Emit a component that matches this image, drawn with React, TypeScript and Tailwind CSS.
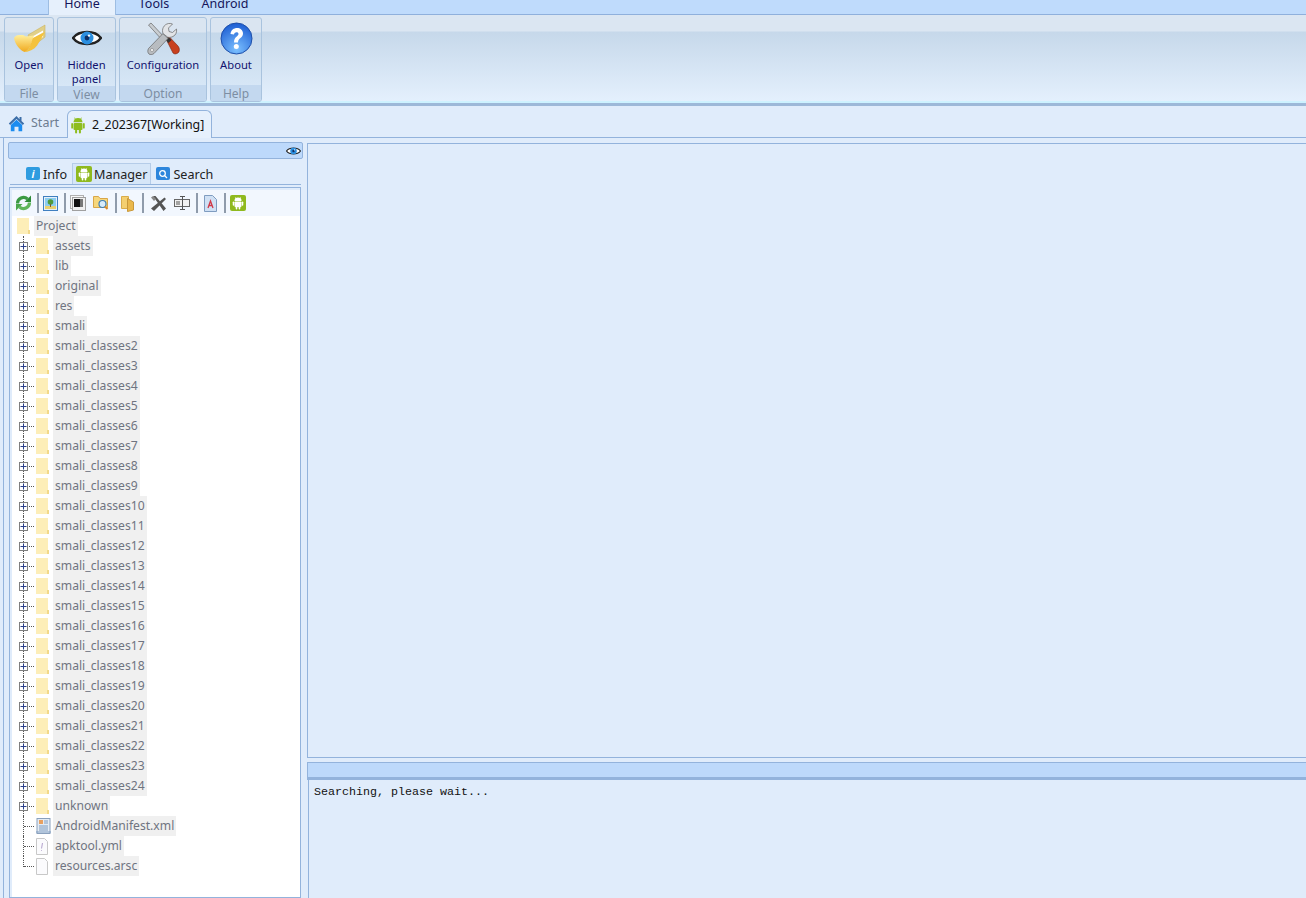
const font = "font-['Noto_Sans','Liberation_Sans',sans-serif]";

const folders = [
  'assets', 'lib', 'original', 'res', 'smali',
  'smali_classes2', 'smali_classes3', 'smali_classes4', 'smali_classes5', 'smali_classes6',
  'smali_classes7', 'smali_classes8', 'smali_classes9', 'smali_classes10', 'smali_classes11',
  'smali_classes12', 'smali_classes13', 'smali_classes14', 'smali_classes15', 'smali_classes16',
  'smali_classes17', 'smali_classes18', 'smali_classes19', 'smali_classes20', 'smali_classes21',
  'smali_classes22', 'smali_classes23', 'smali_classes24', 'unknown',
];

function AndroidIcon({ color = '#8ebd1e', size = 16 }: { color?: string; size?: number }) {
  return (
    <svg width={size} height={size} viewBox="0 0 16 16" className="shrink-0">
      <path d="M4 5.600a4 3.800 0 0 1 8 0z" fill={color} />
      <path d="M5 1.500 6 3.500M11 1.500 10 3.500" stroke={color} strokeWidth="0.8" />
      <rect x="4" y="6.200" width="8" height="6.300" rx="1" fill={color} />
      <rect x="2" y="6.200" width="1.600" height="5" rx="0.8" fill={color} />
      <rect x="12.400" y="6.200" width="1.600" height="5" rx="0.8" fill={color} />
      <rect x="5.400" y="12" width="1.800" height="3.500" rx="0.9" fill={color} />
      <rect x="8.800" y="12" width="1.800" height="3.500" rx="0.9" fill={color} />
    </svg>
  );
}

function BoxedAndroid() {
  return (
    <span className="flex h-4 w-4 shrink-0 items-center justify-center rounded-[2px] bg-[#8fb91e]">
      <AndroidIcon color="#ffffff" size={14} />
    </span>
  );
}

function EyeIcon({ w = 30, h = 20 }: { w?: number; h?: number }) {
  return (
    <svg width={w} height={h} viewBox="0 0 30 20">
      <path d="M1 10C7 2 23 2 29 10C23 18 7 18 1 10Z" fill="#fff" stroke="#222" strokeWidth="2.400" />
      <circle cx="15" cy="10" r="6.500" fill="#2b8fe0" />
      <circle cx="15" cy="10" r="2.400" fill="#0d2f66" />
      <circle cx="17" cy="7.600" r="1.200" fill="#fff" />
    </svg>
  );
}

function HomeIcon() {
  return (
    <svg width="17" height="17" viewBox="0 0 17 17" className="shrink-0">
      <path d="M8.500 1 .800 8.600l1.400 1.300L8.500 4l6.300 5.900 1.400-1.300L13.500 6V2h-2v2.200z" fill="#3c6ea8" />
      <path d="M2.800 10 8.500 4.800l5.700 5.200v6.300h-3.700v-4.500h-4v4.500H2.800z" fill="#1b8cf0" />
    </svg>
  );
}

function OpenIcon() {
  return (
    <svg width="33" height="29" viewBox="0 0 33 29">
      <defs>
        <linearGradient id="openFolder" x1="0" y1="0" x2="0" y2="1">
          <stop offset="0" stopColor="#ffef9c" />
          <stop offset="1" stopColor="#f0a91e" />
        </linearGradient>
      </defs>
      <path d="M15 11 32 1v12L19 23z" fill="#e0cf88" stroke="#cdb35c" strokeWidth="0.6" />
      <path d="M17 14 30 6.500v2L17 16zM17 18.500 30 11v2l-13 7.500z" fill="#fff" />
      <path d="M1 14c1-2 3-3 5-3h4l3 1.500 8-1-3 9c-1 3-3 6-6 7.500C8 27 2 21 1 14z" fill="url(#openFolder)" />
      <path d="M32 8 20 14l-3 8c-1 3-2.500 4.500-5 6 6-.5 11-4 13-8z" fill="#f4c23c" />
    </svg>
  );
}

function ToolsIcon() {
  return (
    <svg width="33" height="33" viewBox="0 0 33 33">
      <path d="M1.500 3 4 1l15 16-2.500 2.500z" fill="#c9cdd1" stroke="#666" strokeWidth="0.7" />
      <path d="M19 17 22 14.500 31 24c2 2.500 1.500 5 .5 6.500-1.500 1.500-4 2-5.500.5z" fill="#c8401e" stroke="#7c2410" strokeWidth="0.6" />
      <path d="M18.500 17.500 21.500 15 24.500 18 21.500 21z" fill="#333" />
      <path d="M1.500 26.500 16 11.500 21 16.500 7 31.500c-2 1.500-4 1.500-5 .5-1.500-1.500-1.500-3.500-.5-5.500z" fill="#b8bcc0" stroke="#666" strokeWidth="0.7" />
      <path d="M16 11.500c-1.500-4 .5-9 5.500-10 1.500-.2 3 0 4 .5L21.500 6l.5 3.500 3.500 1 4-3.500c.5 3-.5 6-3.500 7.500-2.500 1.200-4.500 1-5.500.5z" fill="#e2e4e7" stroke="#666" strokeWidth="0.7" />
      <circle cx="5" cy="28" r="1.500" fill="#fff" stroke="#666" strokeWidth="0.5" />
    </svg>
  );
}

function HelpIcon() {
  return (
    <svg width="33" height="33" viewBox="0 0 33 33">
      <defs>
        <radialGradient id="helpBall" cx="0.5" cy="0.85" r="0.9">
          <stop offset="0" stopColor="#7bc0ff" />
          <stop offset="1" stopColor="#1657d0" />
        </radialGradient>
      </defs>
      <circle cx="16.500" cy="16.500" r="15.500" fill="url(#helpBall)" stroke="#1f4fa8" strokeWidth="1" />
      <path d="M10.500 12c.5-8 12.500-8 12.500-.5 0 4.500-5 4.500-5 9h-4c0-6 4.500-6 4.500-8.500 0-2.500-4-2.500-4.500.5z" fill="#fff" />
      <circle cx="16.300" cy="24.500" r="2.500" fill="#fff" />
    </svg>
  );
}

function RibbonGroup({ width, label, title, icon }: { width: string; label: string; title: React.ReactNode; icon: React.ReactNode }) {
  return (
    <div className={`${width} flex h-[85px] flex-col overflow-hidden rounded-[3px] border border-[#a9c3de] bg-[linear-gradient(#dae5f1_0,#dae5f1_14px,#c5d8ea_15px,#dcebfa_100%)]`}>
      <div className="flex flex-1 flex-col items-center">
        <div className="flex h-[40px] w-full shrink-0 items-center justify-center">{icon}</div>
        <div className="text-center text-[11.2px] leading-[14px] text-[#12126e]">{title}</div>
      </div>
      <div className="h-[16px] bg-[#c3d8ef] text-center text-[12px] leading-[17px] text-[#7d8ea3]">{label}</div>
    </div>
  );
}

function PlusBox() {
  return (
    <span className="flex h-[9px] w-[9px] shrink-0 items-center justify-center border border-[#7f7f7f] bg-white">
      <svg width="7" height="7" viewBox="0 0 7 7">
        <path d="M0.500 3.500h6M3.500 0.500v6" stroke="#2a3f8a" strokeWidth="1" />
      </svg>
    </span>
  );
}

function FolderGlyph() {
  return (
    <svg width="13" height="17" viewBox="0 0 13 17" className="shrink-0">
      <path d="M0 0h12v14l-1 0v2H0z" fill="#fdeeb8" />
      <path d="M11 12h2v4h-2z" fill="#f2d98a" />
    </svg>
  );
}

function ManifestGlyph() {
  return (
    <svg width="15" height="17" viewBox="0 0 15 17" className="shrink-0">
      <rect x="1" y="0.500" width="13" height="15" fill="#e4ecf5" stroke="#8aa0bc" />
      <rect x="3" y="2" width="4" height="4" fill="#e8a060" />
      <path d="M8 3h4M8 5h4M3 8h9M3 10h9M3 12h9M0 14h15" stroke="#7f9cc0" strokeWidth="1" />
    </svg>
  );
}

function FileGlyph({ mark }: { mark?: boolean }) {
  return (
    <svg width="12" height="17" viewBox="0 0 12 17" className="shrink-0">
      <path d="M.500.500h8l3 3v13h-11z" fill="#fbfbfd" stroke="#c8c8c8" />
      {mark && <path d="M6.500 5 5.500 10.500M5.200 12.500h.8" stroke="#b8a8d0" strokeWidth="1.100" />}
    </svg>
  );
}

function TreeRow({ label, icon, plus, last }: { label: string; icon: React.ReactNode; plus?: boolean; last?: boolean }) {
  return (
    <div className="flex h-5 items-center">
      <div className="relative flex h-5 w-[24px] shrink-0 items-center">
        <div className={`absolute left-[11px] top-0 border-l border-dotted border-[#555] ${last ? 'h-[11px]' : 'h-5'}`} />
        <div className="absolute left-[12px] top-[10px] w-[10px] border-t border-dotted border-[#555]" />
        {plus && <div className="absolute left-[7px] top-[6px]"><PlusBox /></div>}
      </div>
      <div className="flex w-[17px] shrink-0 justify-start">{icon}</div>
      <span className="flex h-5 items-center bg-[#f0f0f0] px-[2px] text-[12.150px] text-[#6f7480]">{label}</span>
    </div>
  );
}

function Sep({ className }: { className: string }) {
  return <div className={`${className} h-[20px] w-[2px] shrink-0 bg-[#8f9bab]`} />;
}

function Toolbar() {
  return (
    <div className="flex h-[26px] shrink-0 items-center bg-[#f2f7fe] pl-[3px]">
      <svg width="17" height="18" viewBox="0 0 17 18" className="shrink-0">
        <path d="M2.500 9.500a6 6 0 0 1 10-4.500" fill="none" stroke="#3b9a42" strokeWidth="3.200" />
        <path d="M14.500 8.500a6 6 0 0 1-10 4.500" fill="none" stroke="#5fb55a" strokeWidth="3.200" />
        <path d="M16 1.500v6.500h-6.500z" fill="#2d8a36" />
        <path d="M1 16.500V10h6.500z" fill="#4aa64a" />
      </svg>
      <Sep className="ml-[5px]" />
      <svg width="15" height="15" viewBox="0 0 15 15" className="ml-[4px] shrink-0">
        <rect x="0.500" y="0.500" width="14" height="14" fill="#e6f0fa" stroke="#3f7fc0" />
        <rect x="2" y="2" width="11" height="8" fill="#8ccdf0" />
        <path d="M2 10h11v3H2z" fill="#e8d070" />
        <circle cx="7.500" cy="6" r="2.800" fill="#4f9a3a" />
        <path d="M7 8h1v3H7z" fill="#7a5a2a" />
      </svg>
      <Sep className="ml-[6px]" />
      <svg width="16" height="16" viewBox="0 0 16 16" className="ml-[4px] shrink-0">
        <rect x="0.500" y="0.500" width="13" height="13" fill="#f8f8f8" stroke="#b0b0b0" />
        <rect x="2.500" y="2.500" width="13" height="13" fill="#f0f0f0" stroke="#a0a0a0" />
        <rect x="4" y="4" width="9" height="8" fill="#111" />
        <path d="M10 4h3v8h-3z" fill="#777" />
      </svg>
      <svg width="16" height="16" viewBox="0 0 16 16" className="ml-[7px] shrink-0">
        <path d="M.500 1.500h5l1.500 2h7.500v9H.500z" fill="#f6d77c" stroke="#d9a648" />
        <circle cx="9.500" cy="9" r="3.500" fill="#d8ecfa" stroke="#3f7fb5" strokeWidth="1.200" />
        <path d="m12 11.500 2.500 2.500" stroke="#d98a2b" strokeWidth="2" />
      </svg>
      <Sep className="ml-[6px]" />
      <svg width="13" height="17" viewBox="0 0 13 17" className="ml-[4px] shrink-0">
        <path d="M.500 1.500h7v12h-7z" fill="#f4cf70" stroke="#d9ac4b" />
        <path d="M6.500 3.500 12.500 7v8l-6 1.500z" fill="#eab84c" stroke="#c9983a" />
      </svg>
      <Sep className="ml-[8px]" />
      <svg width="15" height="15" viewBox="0 0 15 15" className="ml-[7px] shrink-0">
        <path d="M2 0 4.500 0 15 12.500 12.500 15zM13.500 1.500 15 3 3 15 0 12.500z" fill="#555" />
        <path d="M0 1.500 2 0l3 3-2 2z" fill="#888" />
      </svg>
      <svg width="16" height="14" viewBox="0 0 16 14" className="ml-[8px] shrink-0">
        <rect x="0.500" y="3.500" width="15" height="7" fill="#f2f2f2" stroke="#666" />
        <path d="M8.500 .5v13M6 .5h5M6 13.500h5M2 6h4M2 8h4" stroke="#555" fill="none" />
      </svg>
      <Sep className="ml-[6px]" />
      <svg width="13" height="17" viewBox="0 0 13 17" className="ml-[6px] shrink-0">
        <path d="M.500.500h8l4 4v12H.500z" fill="#cfe0f4" stroke="#7f9cc0" />
        <path d="M4 13 6.500 6 9 13M5 10.500h3" fill="none" stroke="#d03a4a" strokeWidth="1.300" />
      </svg>
      <Sep className="ml-[7px]" />
      <div className="ml-[4px]"><BoxedAndroid /></div>
    </div>
  );
}

export default function App() {
  return (
    <div className={`${font} flex h-[898px] w-[1306px] flex-col overflow-hidden bg-[#e0ecfb]`}>
      {/* ribbon tabs, cut off at the top of the window */}
      <div className="flex h-[15px] shrink-0 border-b border-[#8fb0dc] bg-[#bfdbfc] pl-[48px] text-[12.500px] text-[#15155a]">
        <div className="-mb-px h-[15px] w-[68px] overflow-hidden border-x border-[#9dbde2] bg-[#e6f0fc] text-center">
          <div className="-mt-[5px] leading-[18px]">Home</div>
        </div>
        <div className="h-[14px] w-[76px] overflow-hidden text-center">
          <div className="-mt-[5px] leading-[18px]">Tools</div>
        </div>
        <div className="h-[14px] w-[66px] overflow-hidden text-center">
          <div className="-mt-[5px] leading-[18px]">Android</div>
        </div>
      </div>

      {/* ribbon */}
      <div className="flex h-[91px] shrink-0 gap-[3px] border-b-[3px] border-[#9db8d8] bg-[linear-gradient(#dbe6f2_0,#dbe6f2_16px,#c6d8ea_17px,#e4f0fd_86px,#cdf2ff_86px)] pl-[4px] pt-[2px]">
        <RibbonGroup width="w-[50px]" label="File" title="Open" icon={<OpenIcon />} />
        <RibbonGroup width="w-[59px]" label="View" title={<>Hidden<br />panel</>} icon={<EyeIcon />} />
        <RibbonGroup width="w-[88px]" label="Option" title="Configuration" icon={<ToolsIcon />} />
        <RibbonGroup width="w-[52px]" label="Help" title="About" icon={<HelpIcon />} />
      </div>

      {/* document tabs */}
      <div className="flex h-[32px] shrink-0 items-end border-b border-[#93b3dc] pl-[8px]">
        <div className="flex h-[28px] w-[59px] items-center gap-[6px] pt-[1px] text-[12.500px] text-[#6d7c90]">
          <HomeIcon />
          Start
        </div>
        <div className="-mb-px flex h-[28px] w-[145px] items-center gap-[5px] rounded-t-[6px] border border-b-0 border-[#93b3dc] bg-[#e6f0fc] pl-[1px] pt-[1px] text-[12.400px] text-[#111]">
          <AndroidIcon size={18} />
          2_202367[Working]
        </div>
      </div>

      <div className="flex min-h-0 flex-1">
        {/* left panel */}
        <div className="ml-[3px] flex w-[301px] shrink-0 flex-col border-l border-[#93b3dc] pl-[4px] pr-[1px] pt-[4px]">
          <div className="flex h-[17px] shrink-0 items-center justify-end rounded-[2px] border border-[#93b3dc] bg-[#bdd9fb] pr-[1px]">
            <EyeIcon w={15} h={10} />
          </div>
          <div className="mx-[2px] mt-[3px] flex h-[23px] shrink-0 items-end border-b border-[#93b3dc] pl-[16px] text-[12.600px] text-[#222]">
            <div className="flex h-[20px] items-center gap-[3px] pr-[5px] pt-[2px]">
              <span className="-mt-[3px] flex h-[13px] w-[14px] items-center justify-center rounded-[2px] bg-[#2f9ce0] text-[10px] font-bold italic leading-none text-white">i</span>
              Info
            </div>
            <div className="flex h-[21px] items-center gap-[2px] border border-b-0 border-[#b5cce8] bg-[#d6e6f8] px-[3px] pt-[2px]">
              <div className="-mt-[3px]"><BoxedAndroid /></div>
              Manager
            </div>
            <div className="flex h-[20px] items-center gap-[3px] pl-[5px] pt-[2px]">
              <span className="-mt-[3px] flex h-[13px] w-[14px] items-center justify-center rounded-[2px] bg-[#2d86dc]">
                <svg width="10" height="10" viewBox="0 0 10 10">
                  <circle cx="4.500" cy="4.500" r="2.800" fill="none" stroke="#fff" strokeWidth="1.300" />
                  <path d="m6.500 6.500 2.500 2.500" stroke="#fff" strokeWidth="1.300" />
                </svg>
              </span>
              Search
            </div>
          </div>
          <div className="ml-[1px] mr-[2px] mt-[2px] flex min-h-0 flex-1 flex-col border border-[#93b3dc] pl-[2px] pt-[2px]">
            <Toolbar />
            <div className="flex-1 bg-white">
              <div className="flex h-5 items-center pl-[5px]">
                <div className="w-[17px] shrink-0"><FolderGlyph /></div>
                <span className="flex h-5 items-center bg-[#f0f0f0] px-[2px] text-[12.150px] text-[#6f7480]">Project</span>
              </div>
              {folders.map(name => (
                <TreeRow key={name} label={name} icon={<FolderGlyph />} plus />
              ))}
              <TreeRow label="AndroidManifest.xml" icon={<ManifestGlyph />} />
              <TreeRow label="apktool.yml" icon={<FileGlyph mark />} />
              <TreeRow label="resources.arsc" icon={<FileGlyph />} last />
            </div>
          </div>
        </div>

        {/* right side */}
        <div className="flex min-w-0 flex-1 flex-col pl-[3px] pt-[5px]">
          <div className="h-[615px] shrink-0 border border-r-0 border-[#93b3dc]" />
          <div className="mt-[4px] h-[18px] shrink-0 border border-r-0 border-b-[3px] border-[#93b3dc] bg-[#bdd9fb]" />
          <div className="ml-[1px] flex-1 border-l border-[#93b3dc] pl-[5px] pt-[5px] font-['Liberation_Mono',monospace] text-[11.670px] leading-[14px] text-[#111]">
            Searching, please wait...
          </div>
        </div>
      </div>
    </div>
  );
}
